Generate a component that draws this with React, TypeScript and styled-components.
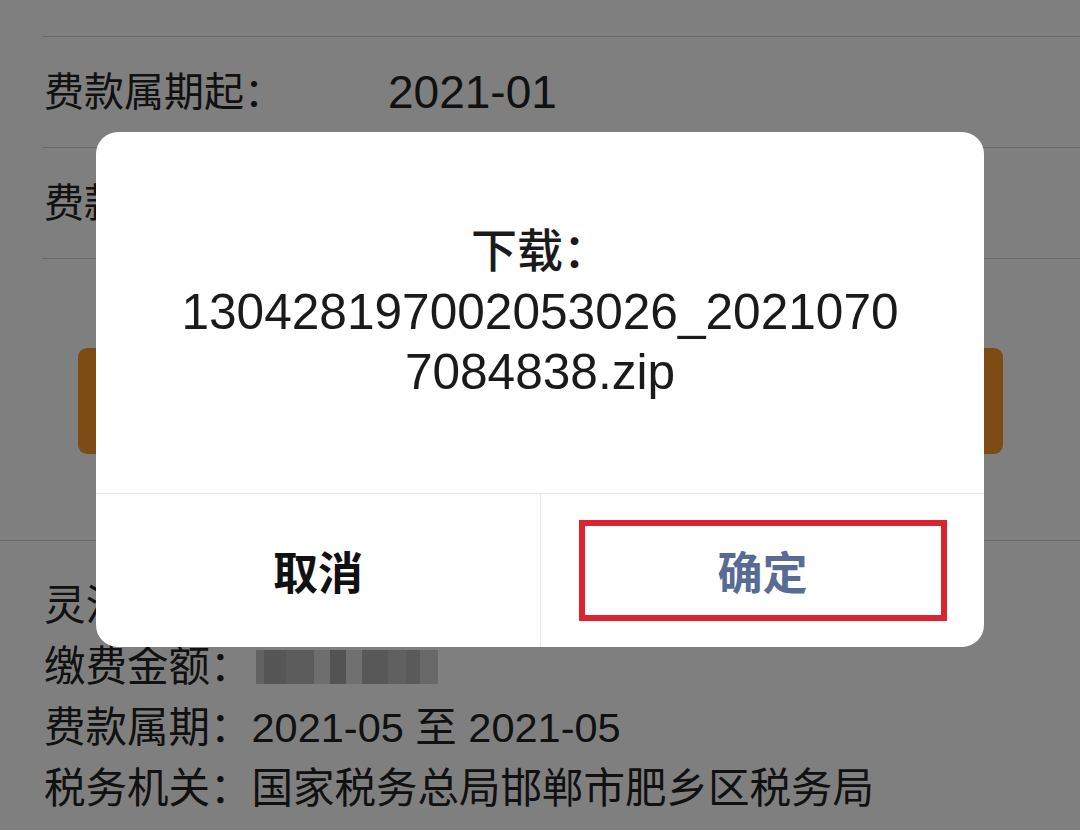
import React from "react";
import styled, { createGlobalStyle } from "styled-components";

const GlobalStyle = createGlobalStyle`
  html, body { margin: 0; padding: 0; background: #808080; }
  body { font-family: "Liberation Sans", "Noto Sans CJK SC", sans-serif; }
  * { box-sizing: border-box; }
`;

const Screen = styled.div`
  position: relative;
  width: 1080px;
  height: 830px;
  overflow: hidden;
  background: #ffffff;
  color: #222222;
`;

const FieldList = styled.div`
  margin: 36px 0 0 42px;
  border-top: 1px solid #d2d2d2;
`;

const FieldRow = styled.div`
  display: flex;
  align-items: center;
  height: 111px;
  padding-left: 2px;
  border-bottom: 1px solid #d2d2d2;
`;

const FieldLabel = styled.span`
  width: 344px;
  font-size: 40px;
  line-height: 1;
`;

const FieldValue = styled.span`
  font-size: 46px;
  line-height: 1;
`;

const ActionArea = styled.div`
  height: 282px;
  padding: 89px 77px 0 78px;
  border-bottom: 1px solid #d2d2d2;
`;

const OrangeButton = styled.div`
  height: 106px;
  border-radius: 9px;
  background: #fa982a;
`;

const InfoList = styled.div`
  padding: 34px 0 0 44px;
  font-size: 41.5px;
  line-height: 61px;
`;

const InfoLine = styled.div`
  display: flex;
  align-items: center;
  white-space: pre;
`;

const Mosaic = styled.div`
  display: flex;
  align-items: stretch;
  height: 34px;
  margin-left: 4px;
`;

const MosaicBlock = styled.div<{ $w: number; $shade: string }>`
  width: ${(p) => p.$w}px;
  background: ${(p) => p.$shade};
`;

const Mask = styled.div`
  position: absolute;
  inset: 0;
  background: rgba(0, 0, 0, 0.5);
  display: flex;
  justify-content: center;
  align-items: flex-start;
  padding-top: 132px;
`;

const Dialog = styled.div`
  width: 888px;
  background: #ffffff;
  border-radius: 22px;
  overflow: hidden;
`;

const DialogBody = styled.div`
  height: 361px;
  padding-bottom: 4px;
  display: flex;
  flex-direction: column;
  align-items: center;
  justify-content: center;
  text-align: center;
  color: #1a1a1a;
`;

const DialogTitle = styled.div`
  font-size: 46px;
  line-height: 62px;
  font-weight: 500;
`;

const FileLine = styled.div`
  font-size: 49.6px;
  line-height: 60px;
`;

const DialogFooter = styled.div`
  display: grid;
  grid-template-columns: 1fr 1fr;
  height: 154px;
  border-top: 1px solid #e6e6e6;
`;

const FooterCell = styled.div<{ $divider?: boolean }>`
  display: flex;
  align-items: center;
  justify-content: center;
  border-left: ${(p) => (p.$divider ? "1px solid #e6e6e6" : "none")};
`;

const FooterButton = styled.span<{ $color: string }>`
  font-size: 45px;
  font-weight: 600;
  color: ${(p) => p.$color};
`;

const Highlight = styled.div`
  width: 368px;
  height: 101px;
  border: 6px solid #dc2430;
  display: flex;
  align-items: center;
  justify-content: center;
`;

const mosaic = [
  { w: 8, shade: "#c4c4c4" },
  { w: 22, shade: "#acacac" },
  { w: 28, shade: "#b8b8b8" },
  { w: 16, shade: "#dcdcdc" },
  { w: 16, shade: "#a6a6a6" },
  { w: 16, shade: "#e0e0e0" },
  { w: 26, shade: "#b0b0b0" },
  { w: 18, shade: "#c0c0c0" },
  { w: 14, shade: "#b4b4b4" },
  { w: 18, shade: "#d0d0d0" },
];

export default function App() {
  return (
    <>
      <GlobalStyle />
      <Screen>
        <FieldList>
          <FieldRow>
            <FieldLabel>费款属期起：</FieldLabel>
            <FieldValue>2021-01</FieldValue>
          </FieldRow>
          <FieldRow>
            <FieldLabel>费款属期止：</FieldLabel>
            <FieldValue>2021-05</FieldValue>
          </FieldRow>
        </FieldList>
        <ActionArea>
          <OrangeButton />
        </ActionArea>
        <InfoList>
          <InfoLine>灵活就业人员社会保险费</InfoLine>
          <InfoLine>
            缴费金额：
            <Mosaic>
              {mosaic.map((b, i) => (
                <MosaicBlock key={i} $w={b.w} $shade={b.shade} />
              ))}
            </Mosaic>
          </InfoLine>
          <InfoLine>费款属期：2021-05 至 2021-05</InfoLine>
          <InfoLine>税务机关：国家税务总局邯郸市肥乡区税务局</InfoLine>
        </InfoList>
        <Mask>
          <Dialog>
            <DialogBody>
              <DialogTitle>下载：</DialogTitle>
              <FileLine>130428197002053026_2021070</FileLine>
              <FileLine>7084838.zip</FileLine>
            </DialogBody>
            <DialogFooter>
              <FooterCell>
                <FooterButton $color="#111111">取消</FooterButton>
              </FooterCell>
              <FooterCell $divider>
                <Highlight>
                  <FooterButton $color="#576b95">确定</FooterButton>
                </Highlight>
              </FooterCell>
            </DialogFooter>
          </Dialog>
        </Mask>
      </Screen>
    </>
  );
}
